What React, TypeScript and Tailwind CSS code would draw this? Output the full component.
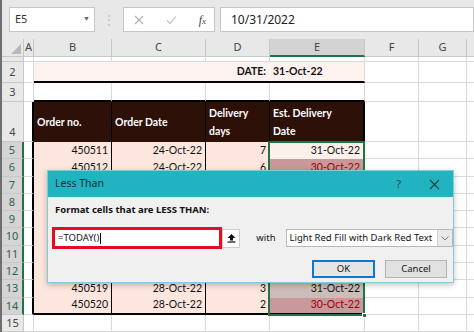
import React from 'react';

type Col = { key: string; w: number; label: string };

const COLS: Col[] = [
  { key: 'A', w: 10, label: 'A' },
  { key: 'B', w: 78, label: 'B' },
  { key: 'C', w: 94, label: 'C' },
  { key: 'D', w: 64, label: 'D' },
  { key: 'E', w: 95, label: 'E' },
  { key: 'F', w: 54, label: 'F' },
  { key: 'G', w: 48, label: 'G' },
  { key: 'H', w: 40, label: '' },
];

const ROW_H: Record<number, number> = { 1: 5, 2: 21, 3: 19, 4: 40 };
const rowHeight = (r: number) => ROW_H[r] ?? 17.3;

// rows 5..14, the ones under the dialog (7-12) are not visible
const orders: ({ no: number; date: string; days: number; est: string } | null)[] = [
  { no: 450511, date: '24-Oct-22', days: 7, est: '31-Oct-22' },
  { no: 450512, date: '24-Oct-22', days: 6, est: '30-Oct-22' },
  null,
  null,
  null,
  null,
  null,
  null,
  { no: 450519, date: '28-Oct-22', days: 3, est: '31-Oct-22' },
  { no: 450520, date: '28-Oct-22', days: 2, est: '30-Oct-22' },
];

function estBg(r: number) {
  const o = orders[r - 5];
  if (r === 5) return 'bg-[#fdf0eb] text-[#111]';
  if (!o) return 'bg-[#cdbdb9]';
  if (o.est === '30-Oct-22') return 'bg-[#c9989b] text-[#9c0006]';
  return 'bg-[#cdbdb9] text-[#111]';
}

function cellClass(r: number, c: string): string {
  const inTable = r >= 4 && r <= 14;
  const tableCol = c === 'B' || c === 'C' || c === 'D' || c === 'E';
  if (r === 2 && tableCol)
    return `border-b-2 border-b-black bg-[#fdf2ee] ${c === 'E' ? 'border-r border-r-[#dadada]' : ''}`;
  if (r === 3 && tableCol) return 'border-b-2 border-b-black border-r border-r-[#dadada]';
  if (c === 'A' && inTable) return 'border-r-2 border-r-black border-b border-b-[#dadada]';
  if (inTable && tableCol) {
    const right = c === 'E' ? 'border-r-2' : 'border-r';
    const bottom = r === 14 ? 'border-b-2 border-b-black' : '';
    let bg = 'bg-[#fce6dd]';
    if (r === 4) bg = 'bg-[#2d1108] text-white font-bold';
    else if (c === 'E') bg = estBg(r);
    return `${right} border-r-black ${bottom} ${bg}`;
  }
  return 'border-r border-b border-[#dadada]';
}

function cellContent(r: number, c: string): React.ReactNode {
  if (r === 2 && c === 'D') return <div className="w-full text-right pr-[4px] font-bold">DATE:</div>;
  if (r === 2 && c === 'E') return <div className="w-full pl-[3px] font-bold">31-Oct-22</div>;
  if (r === 4) {
    const head: Record<string, React.ReactNode> = {
      B: 'Order no.',
      C: 'Order Date',
      D: (<>Delivery<br />days</>),
      E: (<>Est. Delivery<br />Date</>),
    };
    if (head[c]) return <div className="w-full pl-[3px] leading-[18px]">{head[c]}</div>;
  }
  if (r >= 5 && r <= 14) {
    const o = orders[r - 5];
    if (!o) return null;
    const v: Record<string, React.ReactNode> = { B: o.no, C: o.date, D: o.days, E: o.est };
    if (v[c] !== undefined) return <div className="w-full text-right pr-[3px]">{v[c]}</div>;
  }
  return null;
}

function FormulaBar() {
  return (
    <div className="h-[39px] bg-[#e8e8e8] flex items-center pl-[7px] font-['Noto_Sans',sans-serif] text-[#333]">
      <div className="w-[86px] h-[25px] bg-white border border-[#c6c6c6] flex items-center justify-between pl-[5px] pr-[4px] text-[11px]">
        <span>E5</span>
        <span className="text-[#666] text-[7px]">▼</span>
      </div>
      <div className="w-[28px] flex justify-center text-[#bdbdbd] text-[12px]">⋮</div>
      <div className="w-[92px] h-[25px] bg-white border border-[#c6c6c6] flex items-center justify-between pl-[10px] pr-[8px]">
        <svg width="10" height="10" viewBox="0 0 10 10" fill="none" stroke="#b0b0b0" strokeWidth="1.1">
          <path d="M1 1L9 9M9 1L1 9" />
        </svg>
        <svg width="11" height="10" viewBox="0 0 11 10" fill="none" stroke="#b8b8b8" strokeWidth="1.1">
          <path d="M1 5.5L4 8.5L10 1.5" />
        </svg>
        <span className="italic font-['Liberation_Serif',serif] text-[#444] text-[12px] leading-none">
          f<span className="text-[9px]">x</span>
        </span>
      </div>
      <div className="ml-[5px] flex-1 h-[25px] bg-white border border-[#c6c6c6] flex items-center pl-[10px] text-[12px] text-[#222]">
        10/31/2022
      </div>
    </div>
  );
}

function ColumnHeader() {
  return (
    <div className="flex h-[18px] bg-[#e8e8e8] text-[#444] text-[11px] font-['Noto_Sans',sans-serif]">
      <div className="w-[22px] shrink-0 border-r border-b border-[#c8c8c8] relative">
        <svg className="absolute right-[2px] bottom-[2px]" width="10" height="10" viewBox="0 0 10 10">
          <path d="M10 0V10H0Z" fill="#b8b8b8" />
        </svg>
      </div>
      {COLS.map((col) => (
        <div
          key={col.key}
          style={{ width: col.w }}
          className={`shrink-0 flex items-center justify-center border-r border-[#c8c8c8] ${
            col.key === 'E' ? 'bg-[#d3d3d3] border-b-2 border-b-[#217346]' : 'border-b border-b-[#c8c8c8]'
          }`}
        >
          {col.label}
        </div>
      ))}
    </div>
  );
}

function Sheet() {
  const rows = Array.from({ length: 15 }, (_, i) => i + 1);
  return (
    <div className="flex flex-col font-['Lato',sans-serif] text-[10.5px] text-[#111]">
      {rows.map((r) => {
        const selected = r >= 5 && r <= 14;
        return (
          <div key={r} className="flex shrink-0 overflow-hidden" style={{ height: rowHeight(r) }}>
            <div
              className={`w-[22px] shrink-0 flex justify-center overflow-hidden text-[11px] font-['Noto_Sans',sans-serif] border-b border-[#c8c8c8] ${
                selected
                  ? 'bg-[#d4d4d4] text-[#33604a] border-r-2 border-r-[#217346]'
                  : 'bg-[#e8e8e8] text-[#444] border-r border-r-[#c8c8c8]'
              } ${r === 4 ? 'items-end pb-[1px]' : r === 1 ? 'items-end' : 'items-center'}`}
            >
              {r}
            </div>
            {COLS.map((col) => (
              <div
                key={col.key}
                style={{ width: col.w }}
                className={`shrink-0 flex items-center whitespace-nowrap ${cellClass(r, col.key)}`}
              >
                {cellContent(r, col.key)}
              </div>
            ))}
          </div>
        );
      })}
    </div>
  );
}

function Dialog() {
  return (
    <div className="absolute left-[45px] top-[170px] w-[407px] h-[113px] bg-[#f0f0f0] border border-[#7ccfd6] shadow-[0_2px_6px_rgba(0,0,0,0.25)] font-['Noto_Sans',sans-serif] text-[#111]">
      <div className="h-[26px] bg-[#21b3bf] flex items-center pl-[7px] pr-[13px] text-[10.5px] text-[#12303a]">
        <span className="flex-1">Less Than</span>
        <span className="text-[11px] mr-[28px] text-[#1e3d46]">?</span>
        <svg width="11" height="11" viewBox="0 0 11 11" fill="none" stroke="#1e3d46" strokeWidth="1.1">
          <path d="M1 1L10 10M10 1L1 10" />
        </svg>
      </div>
      <div className="pl-[7px] pt-[6px] text-[9.5px] font-bold leading-[14px]">Format cells that are LESS THAN:</div>
      <div className="flex items-center mt-[10px] pl-[4px]">
        <div className="w-[172px] h-[22px] bg-white border-[3px] border-[#e2101e] flex items-center pl-[3px] text-[9.5px]">
          =TODAY()<span className="w-px h-[11px] bg-black ml-[1px]" />
        </div>
        <div className="w-[18px] h-[19px] bg-white border border-[#cfcfcf] flex items-center justify-center">
          <svg width="9" height="10" viewBox="0 0 9 10">
            <path d="M4.5 1L8.5 5H6V7.5H3V5H0.5Z" fill="#111" />
            <path d="M0.5 9H8.5" stroke="#111" strokeWidth="1.2" />
          </svg>
        </div>
        <span className="ml-[16px] text-[9.5px]">with</span>
        <div className="ml-[10px] w-[169px] h-[18px] bg-white border border-[#b9b9b9] flex items-center text-[9.5px]">
          <span className="flex-1 pl-[3px] whitespace-nowrap overflow-hidden">Light Red Fill with Dark Red Text</span>
          <div className="w-[15px] h-full shrink-0 bg-[#e9e9e9] border-l border-[#cfcfcf] flex items-center justify-center">
            <svg width="8" height="5" viewBox="0 0 8 5" fill="none" stroke="#777" strokeWidth="1">
              <path d="M0.5 0.5L4 4L7.5 0.5" />
            </svg>
          </div>
        </div>
      </div>
      <div className="flex justify-end gap-[10px] pr-[6px] mt-[11px] text-[9.5px]">
        <div className="w-[63px] h-[18px] bg-[#e5e5e5] border-2 border-[#0a78d4] flex items-center justify-center">OK</div>
        <div className="w-[62px] h-[18px] bg-[#e1e1e1] border border-[#b4b4b4] flex items-center justify-center">Cancel</div>
      </div>
    </div>
  );
}

export default function App() {
  return (
    <div className="w-[474px] h-[332px] overflow-hidden relative bg-white border-l-2 border-[#6f6f6f]">
      <FormulaBar />
      <ColumnHeader />
      <Sheet />
      {/* selection E5:E14 */}
      <div className="absolute left-[266px] top-[141px] w-[97px] h-[175px] border-2 border-[#217346] pointer-events-none" />
      <div className="absolute left-[360px] top-[313px] w-[5px] h-[5px] bg-[#217346] border border-white" />
      <Dialog />
    </div>
  );
}
